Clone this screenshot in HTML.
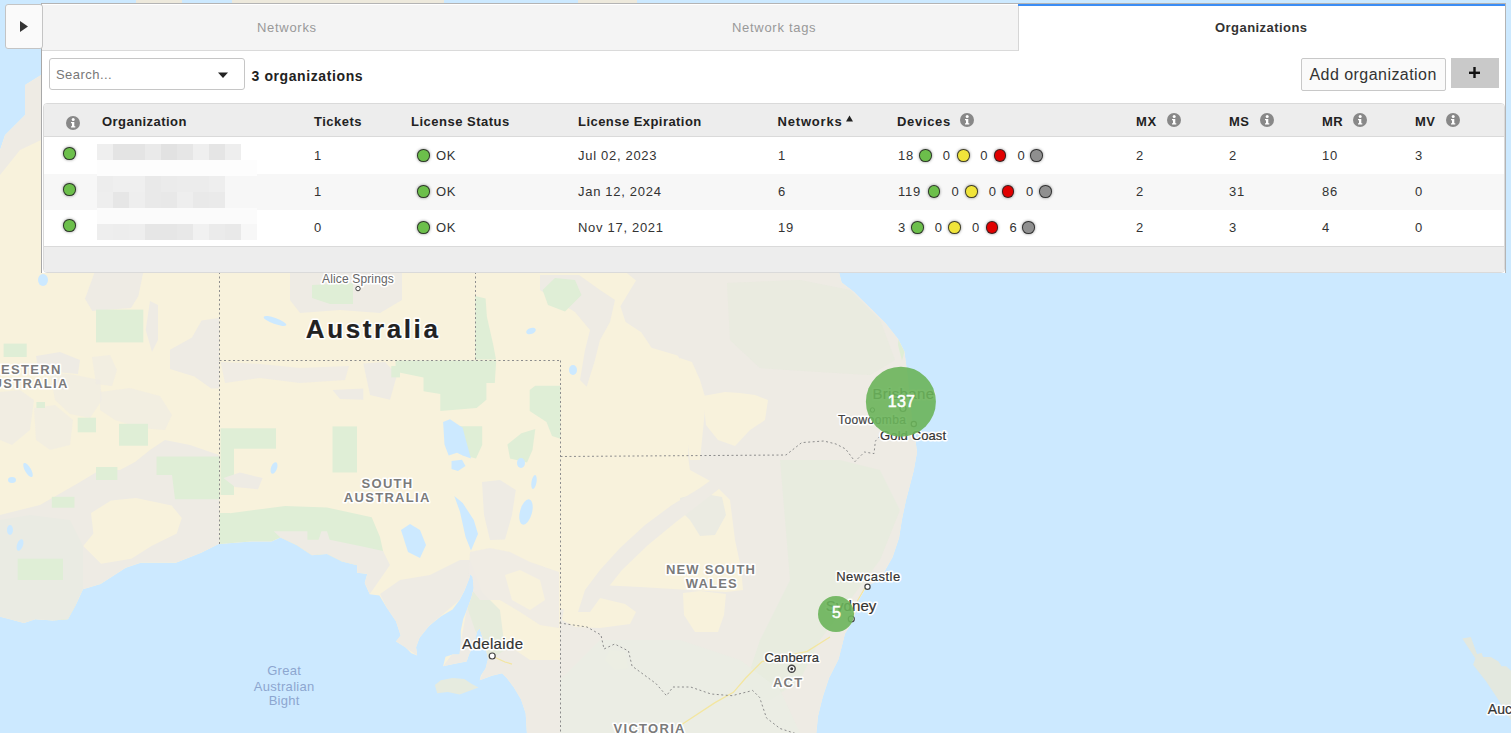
<!DOCTYPE html>
<html><head><meta charset="utf-8">
<style>*{box-sizing:border-box}
html,body{margin:0;padding:0}
body{width:1511px;height:733px;overflow:hidden;position:relative;background:#cce9ff;font-family:"Liberation Sans",sans-serif;color:#333}
#map{position:absolute;left:0;top:0;width:1511px;height:733px}
.abs{position:absolute;white-space:nowrap;line-height:normal}
#toggle{position:absolute;left:5px;top:4px;width:38px;height:45px;background:#fafafa;border:1px solid #c4c4c4;border-radius:3px}
.tabt{font-size:13px;letter-spacing:0.7px}
.dot{position:absolute;width:12.6px;height:12.6px;margin:0.2px 0 0 0.2px;border-radius:50%;border:1.4px solid rgba(35,35,35,0.85);box-shadow:0 0 3px rgba(0,0,0,0.45)}
.g{background:#6cbf4b}.y{background:#f0e43a}.r{background:#e00000}.gr{background:#8f8f8f}
</style></head><body>
<svg id="map" width="1511" height="733" viewBox="0 0 1511 733">
<rect width="1511" height="733" fill="#cce9ff"/>
<path d="M0.0,150.0 L5.0,135.0 L15.0,125.0 L25.0,115.0 L25.0,85.0 L41.0,75.0 L41.0,4.0 L838.0,4.0 L838.4,270.0 L841.6,282.5 L854.0,292.0 L863.5,301.4 L873.0,310.8 L885.5,323.3 L898.0,339.0 L904.3,351.6 L906.0,364.0 L908.0,380.0 L910.0,400.0 L912.0,420.0 L915.3,439.4 L917.0,452.0 L913.7,470.8 L906.0,500.0 L902.0,519.0 L899.0,538.0 L892.6,557.0 L880.0,579.5 L867.0,586.0 L857.6,601.7 L852.9,620.8 L845.0,633.5 L838.6,659.0 L829.0,678.0 L822.7,697.0 L818.0,716.0 L816.3,733.0 L526.9,733.0 L525.7,713.3 L521.0,699.2 L513.9,687.4 L506.8,678.0 L502.1,673.2 L492.7,675.6 L479.7,680.3 L480.9,675.6 L485.6,668.5 L488.0,659.1 L485.6,647.3 L482.0,635.5 L479.7,628.4 L477.3,630.8 L473.8,644.9 L469.0,654.4 L466.7,661.4 L454.9,663.8 L443.1,666.2 L445.5,656.7 L452.6,654.4 L459.6,654.4 L460.8,642.6 L460.8,630.8 L463.2,619.0 L467.9,607.2 L471.4,597.7 L473.8,588.3 L472.6,576.5 L470.3,574.2 L469.0,578.9 L464.4,590.7 L459.6,600.1 L452.6,609.5 L440.8,616.6 L429.0,626.0 L419.5,637.8 L416.0,647.3 L417.2,655.5 L411.3,653.2 L405.4,647.3 L396.0,641.4 L400.7,635.5 L396.0,621.3 L386.5,607.2 L379.4,595.4 L369.7,594.2 L364.7,582.9 L367.2,574.1 L357.1,572.8 L357.1,565.3 L342.0,561.5 L327.0,554.0 L311.9,555.2 L296.8,545.2 L280.4,537.6 L271.6,541.4 L251.5,541.4 L218.8,543.9 L201.2,552.7 L176.0,562.8 L140.8,562.8 L125.8,567.8 L100.6,584.1 L83.0,589.2 L75.5,605.5 L67.9,619.3 L52.8,620.6 L35.2,619.3 L23.9,623.1 L10.0,619.3 L0.0,616.8 Z" fill="#f8f2dc"/>
<path d="M434.9,685.0 L440.8,680.3 L452.6,678.0 L464.4,679.1 L471.4,683.8 L478.5,687.4 L469.0,690.9 L459.6,694.5 L447.8,692.1 L437.2,693.3 Z" fill="#e6ebdf"/>
<path d="M1462.3,638.5 L1470.8,636.9 L1477.0,653.9 L1481.6,653.1 L1483.1,657.0 L1490.8,657.0 L1498.5,661.6 L1501.6,666.2 L1506.2,666.2 L1511.0,670.8 L1511.0,733.0 L1511.0,720.0 L1507.8,715.5 L1498.5,700.1 L1486.2,681.6 L1473.1,664.7 L1475.4,658.5 Z" fill="#e3e8df"/>
<rect x="136" y="0" width="46" height="4" fill="#ede9dc"/><rect x="232" y="0" width="212" height="4" fill="#ede9dc"/><rect x="578" y="0" width="59" height="4" fill="#ede9dc"/>
<clipPath id="lc"><path d="M0.0,150.0 L5.0,135.0 L15.0,125.0 L25.0,115.0 L25.0,85.0 L41.0,75.0 L41.0,4.0 L838.0,4.0 L838.4,270.0 L841.6,282.5 L854.0,292.0 L863.5,301.4 L873.0,310.8 L885.5,323.3 L898.0,339.0 L904.3,351.6 L906.0,364.0 L908.0,380.0 L910.0,400.0 L912.0,420.0 L915.3,439.4 L917.0,452.0 L913.7,470.8 L906.0,500.0 L902.0,519.0 L899.0,538.0 L892.6,557.0 L880.0,579.5 L867.0,586.0 L857.6,601.7 L852.9,620.8 L845.0,633.5 L838.6,659.0 L829.0,678.0 L822.7,697.0 L818.0,716.0 L816.3,733.0 L526.9,733.0 L525.7,713.3 L521.0,699.2 L513.9,687.4 L506.8,678.0 L502.1,673.2 L492.7,675.6 L479.7,680.3 L480.9,675.6 L485.6,668.5 L488.0,659.1 L485.6,647.3 L482.0,635.5 L479.7,628.4 L477.3,630.8 L473.8,644.9 L469.0,654.4 L466.7,661.4 L454.9,663.8 L443.1,666.2 L445.5,656.7 L452.6,654.4 L459.6,654.4 L460.8,642.6 L460.8,630.8 L463.2,619.0 L467.9,607.2 L471.4,597.7 L473.8,588.3 L472.6,576.5 L470.3,574.2 L469.0,578.9 L464.4,590.7 L459.6,600.1 L452.6,609.5 L440.8,616.6 L429.0,626.0 L419.5,637.8 L416.0,647.3 L417.2,655.5 L411.3,653.2 L405.4,647.3 L396.0,641.4 L400.7,635.5 L396.0,621.3 L386.5,607.2 L379.4,595.4 L369.7,594.2 L364.7,582.9 L367.2,574.1 L357.1,572.8 L357.1,565.3 L342.0,561.5 L327.0,554.0 L311.9,555.2 L296.8,545.2 L280.4,537.6 L271.6,541.4 L251.5,541.4 L218.8,543.9 L201.2,552.7 L176.0,562.8 L140.8,562.8 L125.8,567.8 L100.6,584.1 L83.0,589.2 L75.5,605.5 L67.9,619.3 L52.8,620.6 L35.2,619.3 L23.9,623.1 L10.0,619.3 L0.0,616.8 Z"/></clipPath><g clip-path="url(#lc)"><path d="M579.0,272.0 L625.6,272.0 L636.0,280.4 L620.4,306.3 L625.6,321.9 L641.2,332.2 L651.5,347.8 L677.5,355.6 L690.4,373.7 L693.0,394.5 L690.4,415.2 L688.0,456.0 L690.0,470.0 L712.0,482.0 L730.0,500.0 L735.0,540.0 L741.0,568.0 L743.0,590.0 L726.0,592.0 L690.0,590.0 L640.0,587.0 L600.0,585.0 L580.0,605.0 L560.0,610.0 L560.0,733.0 L1000.0,733.0 L1000.0,272.0 Z" fill="#eeebe4"/>
<path d="M680.0,358.0 L692.0,362.0 L700.0,380.0 L706.0,400.0 L703.0,430.0 L700.0,460.0 L690.0,460.0 L685.0,420.0 L680.0,380.0 Z" fill="#f8f2dc"/>
<path d="M703.0,396.0 L725.0,392.0 L740.0,393.0 L755.0,395.0 L768.0,400.0 L765.0,420.0 L750.0,430.0 L735.0,446.0 L718.0,440.0 L706.0,425.0 Z" fill="#f8f2dc"/>
<path d="M683.0,593.0 L700.0,591.0 L726.0,594.0 L724.0,615.0 L718.0,632.0 L695.0,632.0 L684.0,615.0 Z" fill="#f8f2dc"/>
<path d="M565.0,602.0 L600.0,598.0 L625.0,604.0 L636.0,612.0 L630.0,624.0 L600.0,628.0 L575.0,627.0 L562.0,620.0 Z" fill="#f8f2dc"/>
<path d="M610.0,650.0 L625.0,652.0 L628.0,668.0 L615.0,670.0 L605.0,660.0 Z" fill="#f8f2dc"/>
<path d="M680.0,498.0 L700.0,493.0 L722.0,497.0 L726.0,515.0 L715.0,535.0 L700.0,536.0 L690.0,520.0 L682.0,512.0 Z" fill="#ebebe2"/>
<path d="M714.0,478.0 L700.0,488.0 L672.0,505.0 L645.0,525.0 L620.0,548.0 L600.0,570.0 L585.0,590.0 L578.0,612.0 L590.0,612.0 L603.0,594.0 L622.0,570.0 L648.0,545.0 L676.0,522.0 L705.0,500.0 L720.0,488.0 Z" fill="#eeebe4"/>
<path d="M727.0,283.0 L800.0,280.0 L850.0,290.0 L880.0,320.0 L895.0,360.0 L870.0,375.0 L820.0,372.0 L760.0,368.0 L730.0,340.0 Z" fill="#e6ecdc" opacity="0.5"/>
<path d="M780.0,460.0 L840.0,460.0 L880.0,470.0 L900.0,510.0 L880.0,560.0 L850.0,600.0 L820.0,640.0 L800.0,680.0 L770.0,700.0 L740.0,700.0 L760.0,640.0 L790.0,580.0 Z" fill="#e5ecdc" opacity="0.6"/>
<path d="M600.0,640.0 L680.0,640.0 L740.0,660.0 L780.0,690.0 L800.0,733.0 L560.0,733.0 L560.0,680.0 Z" fill="#eaede3" opacity="0.9"/>
<path d="M900.0,316.7 L906.0,318.0 L910.0,330.0 L905.0,350.0 L902.0,360.7 L898.0,345.0 Z" fill="#dfeed6"/>
<path d="M540.0,275.0 L579.0,275.0 L600.0,290.0 L615.0,300.0 L610.0,321.9 L600.0,340.0 L595.0,360.0 L586.7,386.7 L580.0,380.0 L585.0,350.0 L590.0,330.0 L575.0,312.0 L555.0,300.0 L540.0,290.0 Z" fill="#eeebe4"/>
<path d="M475.2,296.0 L485.6,298.5 L486.9,316.7 L493.3,345.0 L496.0,359.5 L475.2,359.5 Z" fill="#dfeed6"/>
<path d="M542.6,290.0 L555.0,278.0 L575.0,280.0 L581.5,295.0 L565.0,311.5 L548.0,305.0 Z" fill="#dfeed6"/>
<path d="M395.6,360.6 L496.2,360.6 L494.8,383.0 L486.4,383.0 L486.4,399.7 L476.6,408.0 L440.3,410.9 L440.3,394.0 L423.5,391.3 L423.5,377.4 L395.6,371.8 Z" fill="#dfeed6"/>
<path d="M529.7,390.0 L535.3,385.7 L560.5,385.7 L560.5,438.8 L552.0,436.0 L546.5,422.0 L529.7,411.0 Z" fill="#dfeed6"/>
<path d="M507.4,444.4 L521.4,433.3 L535.3,429.0 L532.5,450.0 L527.0,462.6 L510.0,458.4 Z" fill="#dfeed6"/>
<path d="M459.9,426.3 L482.2,426.3 L482.2,445.0 L476.0,458.4 L462.0,455.0 Z" fill="#dfeed6"/>
<rect x="332.5" y="426.4" width="24.5" height="46.10000000000002" fill="#dfeed6"/>
<path d="M220.6,428.3 L276.0,428.3 L276.0,448.8 L234.0,448.8 L234.0,495.0 L220.6,495.0 Z" fill="#dfeed6"/>
<path d="M220.6,514.5 L285.0,506.0 L327.0,507.5 L371.7,517.3 L380.0,537.0 L385.0,560.0 L357.0,565.0 L342.0,561.5 L327.0,554.0 L311.9,555.2 L296.8,545.2 L280.4,537.6 L271.6,541.4 L251.5,541.4 L220.6,544.0 Z" fill="#dfeed6"/>
<path d="M273.8,531.3 L307.4,531.3 L307.4,539.7 L318.6,539.7 L321.4,531.3 L327.0,531.3 L329.7,539.7 L360.0,546.0 L383.0,551.0 L390.0,565.0 L369.7,594.2 L364.7,582.9 L367.2,574.1 L357.1,572.8 L357.1,565.3 L342.0,561.5 L327.0,554.0 L311.9,555.2 L296.8,545.2 L280.4,537.6 Z" fill="#eeebe4"/>
<path d="M223.4,478.0 L240.0,472.5 L262.6,478.0 L258.0,489.3 L235.0,487.0 Z" fill="#eeebe4"/>
<path d="M220.6,362.0 L260.0,364.0 L300.0,368.0 L349.0,366.0 L345.0,380.0 L300.0,383.0 L260.0,378.0 L225.0,383.0 Z" fill="#eeebe4" opacity="0.9"/>
<path d="M332.5,390.0 L363.3,388.6 L363.3,399.8 L340.0,399.0 Z" fill="#eeebe4"/>
<path d="M363.3,363.4 L385.0,362.0 L397.0,375.0 L390.0,399.8 L370.0,395.0 Z" fill="#eeebe4"/>
<path d="M391.3,366.0 L400.0,366.0 L400.0,377.4 L391.3,377.4 Z" fill="#dfeed6"/>
<path d="M290.0,272.0 L402.0,272.0 L402.0,300.0 L380.0,313.0 L340.0,310.0 L300.0,313.0 L290.0,300.0 Z" fill="#eeebe4"/>
<path d="M312.0,285.0 L353.0,283.0 L353.0,304.0 L330.0,304.0 L312.0,298.0 Z" fill="#dfeed6"/>
<path d="M380.0,594.0 L400.0,580.0 L430.0,575.0 L460.0,560.0 L470.0,560.0 L485.0,600.0 L500.0,640.0 L530.0,660.0 L560.0,660.0 L560.0,733.0 L526.9,733.0 L513.9,687.4 L492.7,675.6 L479.7,680.3 L488.0,659.1 L479.7,628.4 L466.7,661.4 L443.1,666.2 L460.8,642.6 L472.6,576.5 L459.6,600.1 L429.0,626.0 L417.2,655.5 L396.0,641.4 L386.5,607.2 Z" fill="#eeebe4"/>
<path d="M482.0,482.0 L500.0,480.0 L515.8,490.0 L512.0,515.0 L505.0,539.5 L490.0,540.0 L484.0,515.0 Z" fill="#eeebe4"/>
<path d="M463.0,595.0 L480.0,590.0 L500.0,610.0 L505.0,650.0 L490.0,660.0 L475.0,630.0 Z" fill="#e6ecdc"/>
<path d="M470.0,552.0 L490.0,548.0 L510.0,552.0 L530.0,562.0 L559.0,572.0 L559.0,628.0 L540.0,625.0 L520.0,612.0 L500.0,600.0 L480.0,600.0 L468.0,585.0 Z" fill="#eeebe4" opacity="0.9"/>
<path d="M505.0,575.0 L520.0,570.0 L540.0,580.0 L545.0,600.0 L530.0,610.0 L512.0,600.0 Z" fill="#f8f2dc"/>
<ellipse cx="275" cy="321" rx="12" ry="3" fill="#cce9ff" transform="rotate(20 275 321)"/>
<path d="M443.1,422.0 L450.0,419.3 L462.7,427.7 L465.5,438.8 L471.0,458.4 L462.7,455.6 L457.0,452.8 L448.7,455.6 L444.5,444.4 Z" fill="#cce9ff"/>
<path d="M451.5,461.0 L462.0,459.8 L465.5,466.0 L458.0,471.0 L451.5,469.0 Z" fill="#cce9ff"/>
<path d="M454.3,496.0 L462.7,503.0 L473.8,520.0 L478.0,534.0 L471.0,550.6 L465.5,536.7 L459.9,511.5 Z" fill="#cce9ff"/>
<ellipse cx="526" cy="512" rx="6" ry="13" fill="#cce9ff" transform="rotate(15 526 512)"/>
<path d="M401.0,530.0 L410.0,524.0 L420.0,530.0 L426.0,545.0 L420.0,558.0 L408.0,552.0 Z" fill="#cce9ff"/>
<ellipse cx="521" cy="463" rx="4" ry="5" fill="#cce9ff" transform="rotate(0 521 463)"/>
<ellipse cx="534" cy="482" rx="2.5" ry="7" fill="#cce9ff" transform="rotate(10 534 482)"/>
<ellipse cx="274" cy="468" rx="3" ry="6" fill="#cce9ff" transform="rotate(20 274 468)"/>
<ellipse cx="531" cy="331" rx="5" ry="3" fill="#cce9ff" transform="rotate(-20 531 331)"/>
<ellipse cx="573" cy="370" rx="4" ry="5" fill="#cce9ff" transform="rotate(0 573 370)"/>
<ellipse cx="43" cy="280" rx="5" ry="6" fill="#cce9ff" transform="rotate(0 43 280)"/>
<path d="M94.7,272.0 L143.3,272.0 L138.4,296.0 L131.0,308.0 L92.3,311.0 L85.0,298.7 Z" fill="#eeebe4"/>
<rect x="96" y="309.6" width="47.30000000000001" height="32.799999999999955" fill="#dfeed6"/>
<path d="M150.0,301.0 L158.0,305.0 L158.0,340.0 L152.0,352.0 L145.7,330.0 Z" fill="#eeebe4"/>
<path d="M170.0,349.7 L192.0,337.6 L201.6,320.6 L219.0,318.0 L219.0,388.6 L211.3,388.6 L194.3,376.4 L170.0,369.0 Z" fill="#eeebe4"/>
<rect x="3.6" y="343.6" width="23.099999999999998" height="13.399999999999977" fill="#dfeed6"/>
<path d="M36.0,356.0 L60.0,352.0 L80.0,360.0 L78.0,374.0 L55.0,372.0 L38.0,368.0 Z" fill="#eeebe4"/>
<path d="M50.0,372.0 L75.0,375.0 L100.0,380.0 L102.0,400.0 L90.0,418.0 L70.0,414.0 L55.0,400.0 Z" fill="#eeebe4" opacity="0.6"/>
<path d="M92.0,357.0 L110.0,355.0 L117.0,370.0 L112.0,386.0 L96.0,384.0 Z" fill="#eeebe4" opacity="0.6"/>
<path d="M100.0,392.0 L130.0,388.0 L160.0,396.0 L172.0,415.0 L165.0,430.0 L140.0,428.0 L115.0,420.0 L100.0,410.0 Z" fill="#eeebe4" opacity="0.6"/>
<path d="M34.0,408.0 L55.0,405.0 L73.0,420.0 L70.0,445.0 L50.0,450.0 L36.0,440.0 Z" fill="#eeebe4" opacity="0.6"/>
<path d="M0.0,392.0 L20.0,390.0 L34.0,400.0 L30.0,430.0 L12.0,445.0 L0.0,440.0 Z" fill="#eeebe4" opacity="0.7"/>
<rect x="77.7" y="417.7" width="18.299999999999997" height="14.600000000000023" fill="#dfeed6"/>
<rect x="119" y="423.8" width="29" height="21.899999999999977" fill="#dfeed6"/>
<rect x="36.4" y="402" width="8.600000000000001" height="6" fill="#dfeed6"/>
<path d="M0.0,515.0 L40.0,505.0 L75.0,485.0 L100.0,470.0 L120.0,470.0 L135.0,462.0 L150.0,450.0 L165.0,440.0 L190.0,445.0 L219.0,455.0 L219.0,544.0 L201.0,552.7 L176.0,562.8 L140.8,562.8 L125.8,567.8 L100.6,584.1 L83.0,589.2 L75.5,605.5 L67.9,619.3 L52.8,620.6 L35.2,619.3 L23.9,623.1 L10.0,619.3 L0.0,616.8 Z" fill="#eeebe4"/>
<path d="M91.0,513.0 L111.0,500.6 L136.0,498.0 L171.7,505.6 L181.8,518.0 L176.7,533.4 L151.5,546.0 L131.3,558.7 L101.0,563.7 L83.3,546.0 L93.4,533.4 Z" fill="#f8f2dc"/>
<path d="M156.5,456.4 L219.6,456.4 L219.6,499.3 L175.0,499.3 L172.0,475.0 L156.5,475.0 Z" fill="#dfeed6"/>
<rect x="219.6" y="513" width="10.400000000000006" height="30.5" fill="#dfeed6"/>
<rect x="96" y="467" width="21.400000000000006" height="13" fill="#dfeed6"/>
<rect x="51.8" y="496.8" width="22.700000000000003" height="10.899999999999977" fill="#dfeed6"/>
<rect x="17.7" y="558.7" width="45.3" height="21.299999999999955" fill="#dfeed6"/>
<path d="M55.5,599.0 L75.7,599.0 L75.5,605.5 L67.9,619.3 L55.5,621.8 Z" fill="#dfeed6"/>
<path d="M0.0,520.0 L30.0,515.0 L70.0,520.0 L83.0,546.0 L83.0,589.2 L75.5,605.5 L67.9,619.3 L52.8,620.6 L35.2,619.3 L23.9,623.1 L10.0,619.3 L0.0,616.8 Z" fill="#eaebe3"/>
<rect x="17.7" y="558.7" width="45.3" height="21.299999999999955" fill="#dfeed6"/>
<ellipse cx="28" cy="470" rx="3" ry="8" fill="#cce9ff" transform="rotate(-30 28 470)"/>
<ellipse cx="12" cy="480" rx="4" ry="3" fill="#cce9ff" transform="rotate(0 12 480)"/>
<ellipse cx="10" cy="530" rx="3" ry="5" fill="#cce9ff" transform="rotate(0 10 530)"/>
<ellipse cx="20" cy="545" rx="3" ry="6" fill="#cce9ff" transform="rotate(20 20 545)"/>
<path d="M41.0,75.0 L25.0,85.0 L25.0,115.0 L15.0,125.0 L5.0,135.0 L0.0,150.0 L0.0,175.0 L20.0,150.0 L41.0,140.0 Z" fill="#eeebe4"/>
<path d="M830,637 L807.2,651.3 L762,661.5 L745.7,678 L733.4,692.3 L715,702.6 L684,723 L670,733" fill="none" stroke="#f3e6a0" stroke-width="1.3"/>
<path d="M492,656 L505,662 L512,664" fill="none" stroke="#f3e6a0" stroke-width="1.3"/>
<path d="M852,619 L858,600 L865,588" fill="none" stroke="#f3e6a0" stroke-width="1.3"/></g>
<path d="M219.5,272 V544" fill="none" stroke="#8d8d8d" stroke-width="1" stroke-dasharray="2,2.5"/>
<path d="M475.5,272 V360.5 M219.5,360.5 H560.5 M560.5,360.5 V733" fill="none" stroke="#8d8d8d" stroke-width="1" stroke-dasharray="2,2.5"/>
<path d="M560.5,456.5 L786,455 L801.7,442.6 L823.7,441 L836,444 L845.6,449 L855,461.5 L864.5,452 L874,453.6 L875.4,441 L880,436.4" fill="none" stroke="#8d8d8d" stroke-width="1" stroke-dasharray="2,2.5"/>
<path d="M559.5,623 L587,627 L601,635 L604,649 L614.7,644 L628.5,651 L632,666 L656,683.6 L666.5,695.7 L673,687 L690.6,687 L711,694 L732,695.7 L752.7,690.5 L759.6,697.4 L766.5,718 L780,728.5 L800,735" fill="none" stroke="#8d8d8d" stroke-width="1" stroke-dasharray="2,2.5"/>
<text x="322" y="282.6" font-family="Liberation Sans" font-size="12" font-weight="normal" letter-spacing="0.15" text-anchor="start" opacity="1" fill="#fff" stroke="#fff" stroke-width="3.2" stroke-linejoin="round" opacity="0.9">Alice Springs</text><text x="322" y="282.6" font-family="Liberation Sans" font-size="12" font-weight="normal" letter-spacing="0.15" text-anchor="start" opacity="1" fill="#666" stroke="#666" stroke-width="0">Alice Springs</text>
<text x="305.8" y="338.3" font-family="Liberation Sans" font-size="26" font-weight="bold" letter-spacing="2.6" text-anchor="start" opacity="1" fill="#fff" stroke="#fff" stroke-width="3.2" stroke-linejoin="round" opacity="0.9">Australia</text><text x="305.8" y="338.3" font-family="Liberation Sans" font-size="26" font-weight="bold" letter-spacing="2.6" text-anchor="start" opacity="1" fill="#222" stroke="#222" stroke-width="0.2">Australia</text>
<text x="61.6" y="374.2" font-family="Liberation Sans" font-size="13" font-weight="bold" letter-spacing="1.3" text-anchor="end" opacity="1" fill="#fff" stroke="#fff" stroke-width="3.2" stroke-linejoin="round" opacity="0.9">WESTERN</text><text x="61.6" y="374.2" font-family="Liberation Sans" font-size="13" font-weight="bold" letter-spacing="1.3" text-anchor="end" opacity="1" fill="#7b7b7b" stroke="#7b7b7b" stroke-width="0">WESTERN</text>
<text x="68.7" y="387.8" font-family="Liberation Sans" font-size="13" font-weight="bold" letter-spacing="1.3" text-anchor="end" opacity="1" fill="#fff" stroke="#fff" stroke-width="3.2" stroke-linejoin="round" opacity="0.9">AUSTRALIA</text><text x="68.7" y="387.8" font-family="Liberation Sans" font-size="13" font-weight="bold" letter-spacing="1.3" text-anchor="end" opacity="1" fill="#7b7b7b" stroke="#7b7b7b" stroke-width="0">AUSTRALIA</text>
<text x="361.5" y="487.8" font-family="Liberation Sans" font-size="13" font-weight="bold" letter-spacing="1.3" text-anchor="start" opacity="1" fill="#fff" stroke="#fff" stroke-width="3.2" stroke-linejoin="round" opacity="0.9">SOUTH</text><text x="361.5" y="487.8" font-family="Liberation Sans" font-size="13" font-weight="bold" letter-spacing="1.3" text-anchor="start" opacity="1" fill="#7b7b7b" stroke="#7b7b7b" stroke-width="0">SOUTH</text>
<text x="343.8" y="501.7" font-family="Liberation Sans" font-size="13" font-weight="bold" letter-spacing="1.3" text-anchor="start" opacity="1" fill="#fff" stroke="#fff" stroke-width="3.2" stroke-linejoin="round" opacity="0.9">AUSTRALIA</text><text x="343.8" y="501.7" font-family="Liberation Sans" font-size="13" font-weight="bold" letter-spacing="1.3" text-anchor="start" opacity="1" fill="#7b7b7b" stroke="#7b7b7b" stroke-width="0">AUSTRALIA</text>
<text x="665.9" y="574.3" font-family="Liberation Sans" font-size="13" font-weight="bold" letter-spacing="1.2" text-anchor="start" opacity="1" fill="#fff" stroke="#fff" stroke-width="3.2" stroke-linejoin="round" opacity="0.9">NEW SOUTH</text><text x="665.9" y="574.3" font-family="Liberation Sans" font-size="13" font-weight="bold" letter-spacing="1.2" text-anchor="start" opacity="1" fill="#7b7b7b" stroke="#7b7b7b" stroke-width="0">NEW SOUTH</text>
<text x="685.7" y="587.8" font-family="Liberation Sans" font-size="13" font-weight="bold" letter-spacing="1.2" text-anchor="start" opacity="1" fill="#fff" stroke="#fff" stroke-width="3.2" stroke-linejoin="round" opacity="0.9">WALES</text><text x="685.7" y="587.8" font-family="Liberation Sans" font-size="13" font-weight="bold" letter-spacing="1.2" text-anchor="start" opacity="1" fill="#7b7b7b" stroke="#7b7b7b" stroke-width="0">WALES</text>
<text x="613.5" y="733" font-family="Liberation Sans" font-size="13" font-weight="bold" letter-spacing="1.3" text-anchor="start" opacity="1" fill="#fff" stroke="#fff" stroke-width="3.2" stroke-linejoin="round" opacity="0.9">VICTORIA</text><text x="613.5" y="733" font-family="Liberation Sans" font-size="13" font-weight="bold" letter-spacing="1.3" text-anchor="start" opacity="1" fill="#7b7b7b" stroke="#7b7b7b" stroke-width="0">VICTORIA</text>
<text x="773" y="686.7" font-family="Liberation Sans" font-size="13" font-weight="bold" letter-spacing="1.2" text-anchor="start" opacity="1" fill="#fff" stroke="#fff" stroke-width="3.2" stroke-linejoin="round" opacity="0.9">ACT</text><text x="773" y="686.7" font-family="Liberation Sans" font-size="13" font-weight="bold" letter-spacing="1.2" text-anchor="start" opacity="1" fill="#7b7b7b" stroke="#7b7b7b" stroke-width="0">ACT</text>
<text x="764.4" y="661.5" font-family="Liberation Sans" font-size="13" font-weight="normal" letter-spacing="0.05" text-anchor="start" opacity="1" fill="#fff" stroke="#fff" stroke-width="3.2" stroke-linejoin="round" opacity="0.9">Canberra</text><text x="764.4" y="661.5" font-family="Liberation Sans" font-size="13" font-weight="normal" letter-spacing="0.05" text-anchor="start" opacity="1" fill="#333" stroke="#333" stroke-width="0.2">Canberra</text>
<text x="836.2" y="580.5" font-family="Liberation Sans" font-size="13" font-weight="normal" letter-spacing="0.5" text-anchor="start" opacity="1" fill="#fff" stroke="#fff" stroke-width="3.2" stroke-linejoin="round" opacity="0.9">Newcastle</text><text x="836.2" y="580.5" font-family="Liberation Sans" font-size="13" font-weight="normal" letter-spacing="0.5" text-anchor="start" opacity="1" fill="#333" stroke="#333" stroke-width="0.2">Newcastle</text>
<text x="825.8" y="611.3" font-family="Liberation Sans" font-size="15" font-weight="normal" letter-spacing="0.1" text-anchor="start" opacity="1" fill="#fff" stroke="#fff" stroke-width="3.2" stroke-linejoin="round" opacity="0.9">Sydney</text><text x="825.8" y="611.3" font-family="Liberation Sans" font-size="15" font-weight="normal" letter-spacing="0.1" text-anchor="start" opacity="1" fill="#333" stroke="#333" stroke-width="0.2">Sydney</text>
<text x="462" y="648.5" font-family="Liberation Sans" font-size="15" font-weight="normal" letter-spacing="0.4" text-anchor="start" opacity="1" fill="#fff" stroke="#fff" stroke-width="3.2" stroke-linejoin="round" opacity="0.9">Adelaide</text><text x="462" y="648.5" font-family="Liberation Sans" font-size="15" font-weight="normal" letter-spacing="0.4" text-anchor="start" opacity="1" fill="#333" stroke="#333" stroke-width="0.2">Adelaide</text>
<text x="838" y="424.4" font-family="Liberation Sans" font-size="12" font-weight="normal" letter-spacing="0.4" text-anchor="start" opacity="1" fill="#fff" stroke="#fff" stroke-width="3.2" stroke-linejoin="round" opacity="0.9">Toowoomba</text><text x="838" y="424.4" font-family="Liberation Sans" font-size="12" font-weight="normal" letter-spacing="0.4" text-anchor="start" opacity="1" fill="#444" stroke="#444" stroke-width="0.2">Toowoomba</text>
<text x="880.1" y="440.4" font-family="Liberation Sans" font-size="13" font-weight="normal" letter-spacing="0.1" text-anchor="start" opacity="1" fill="#fff" stroke="#fff" stroke-width="3.2" stroke-linejoin="round" opacity="0.9">Gold Coast</text><text x="880.1" y="440.4" font-family="Liberation Sans" font-size="13" font-weight="normal" letter-spacing="0.1" text-anchor="start" opacity="1" fill="#333" stroke="#333" stroke-width="0.2">Gold Coast</text>
<text x="872.4" y="399" font-family="Liberation Sans" font-size="15" font-weight="normal" letter-spacing="0.35" text-anchor="start" opacity="1" fill="#fff" stroke="#fff" stroke-width="3.2" stroke-linejoin="round" opacity="0.9">Brisbane</text><text x="872.4" y="399" font-family="Liberation Sans" font-size="15" font-weight="normal" letter-spacing="0.35" text-anchor="start" opacity="1" fill="#333" stroke="#333" stroke-width="0.2">Brisbane</text>
<text x="284.2" y="675" font-family="Liberation Sans" font-size="13" font-weight="normal" letter-spacing="0.3" text-anchor="middle" opacity="1" fill="#8ca6cf" stroke="#8ca6cf" stroke-width="0">Great</text>
<text x="284.2" y="690.5" font-family="Liberation Sans" font-size="13" font-weight="normal" letter-spacing="0.3" text-anchor="middle" opacity="1" fill="#8ca6cf" stroke="#8ca6cf" stroke-width="0">Australian</text>
<text x="284.2" y="705" font-family="Liberation Sans" font-size="13" font-weight="normal" letter-spacing="0.3" text-anchor="middle" opacity="1" fill="#8ca6cf" stroke="#8ca6cf" stroke-width="0">Bight</text>
<text x="1487.7" y="714" font-family="Liberation Sans" font-size="14" font-weight="normal" letter-spacing="0.1" text-anchor="start" opacity="1" fill="#fff" stroke="#fff" stroke-width="3.2" stroke-linejoin="round" opacity="0.9">Auckland</text><text x="1487.7" y="714" font-family="Liberation Sans" font-size="14" font-weight="normal" letter-spacing="0.1" text-anchor="start" opacity="1" fill="#333" stroke="#333" stroke-width="0.2">Auckland</text>
<circle cx="358" cy="288.6" r="2.2" fill="#fff" stroke="#444" stroke-width="1"/>
<circle cx="492.2" cy="656" r="3" fill="#fff" stroke="#444" stroke-width="1.2"/>
<circle cx="791.7" cy="668.8" r="3.5" fill="#fff" stroke="#444" stroke-width="1.4"/><circle cx="791.7" cy="668.8" r="1.5" fill="#333"/>
<circle cx="867.5" cy="586.7" r="2.6" fill="#fff" stroke="#444" stroke-width="1.2"/>
<circle cx="851.3" cy="619" r="3" fill="#fff" stroke="#444" stroke-width="1.2"/>
<circle cx="872.4" cy="410" r="2.2" fill="#fff" stroke="#444" stroke-width="1"/>
<circle cx="913.8" cy="424" r="2.6" fill="#fff" stroke="#444" stroke-width="1.2"/>
<circle cx="903" cy="408.5" r="3" fill="#fff" stroke="#444" stroke-width="1.2"/>
<circle cx="900.9" cy="401.7" r="35" fill="#6ab45a" opacity="0.9"/>
<circle cx="836" cy="614" r="18" fill="#6ab45a" opacity="0.9"/>
<text x="901.5" y="406.6" font-family="Liberation Sans" font-size="16" font-weight="normal" letter-spacing="0.3" text-anchor="middle" opacity="1" fill="#fff" stroke="#fff" stroke-width="0.5">137</text>
<text x="836.4" y="618.4" font-family="Liberation Sans" font-size="16" font-weight="normal" letter-spacing="0" text-anchor="middle" opacity="1" fill="#fff" stroke="#fff" stroke-width="0.5">5</text>
</svg>


<!-- panel frame -->
<div class="abs" style="left:41px;top:3px;width:1465px;height:270px;background:#fff;border-left:1px solid #a8a8a8;border-top:1px solid #b4b4b4;border-right:1px solid #b4b4b4"></div>
<!-- inactive tabs -->
<div class="abs" style="left:42px;top:5px;width:977px;height:46px;background:#f4f4f4;border-bottom:1px solid #dadada;border-right:1px solid #d6d6d6"></div>
<div class="abs" style="left:1018px;top:4px;width:487px;height:2px;background:#3b8df5"></div>
<div class="abs tabt" style="left:257px;top:20.1px;color:#999">Networks</div>
<div class="abs tabt" style="left:732px;top:20.1px;color:#999">Network tags</div>
<div class="abs tabt" style="left:1215px;top:20.1px;color:#333;font-weight:bold;letter-spacing:0.45px">Organizations</div>

<!-- toolbar -->
<div class="abs" style="left:49px;top:58px;width:196px;height:32px;border:1px solid #c6c6c6;border-radius:3px;background:#fff"></div>
<div class="abs" style="left:56px;top:67.2px;font-size:13px;letter-spacing:0.45px;color:#777">Search...</div>
<svg class="abs" style="left:217px;top:72px" width="12" height="7"><polygon points="1,0.5 11,0.5 6,6" fill="#222"/></svg>
<div class="abs" style="left:251.5px;top:67.9px;font-size:14px;font-weight:bold;letter-spacing:0.6px;color:#222">3 organizations</div>
<div class="abs" style="left:1301px;top:58px;width:145px;height:33px;border:1px solid #c8c8c8;border-radius:2px;background:#fafafa"></div>
<div class="abs" style="left:1309.5px;top:66px;font-size:16px;letter-spacing:0.45px;color:#333">Add organization</div>
<div class="abs" style="left:1451px;top:58px;width:48px;height:30px;background:#c9c9c9"></div>
<svg class="abs" style="left:1469px;top:67px" width="12" height="12"><rect x="0" y="4.6" width="11" height="2.4" fill="#111"/><rect x="4.3" y="0" width="2.4" height="11" fill="#111"/></svg>

<!-- table -->
<div class="abs" style="left:43px;top:103px;width:1462px;height:170px;border:1px solid #dadada;border-radius:4px;background:#fff;overflow:hidden">
  <div class="abs" style="left:0;top:0;width:1460px;height:33px;background:#ededed;border-bottom:1px solid #dadada"></div>
  <div class="abs" style="left:0;top:70px;width:1460px;height:36px;background:#f7f7f7"></div>
  <div class="abs" style="left:0;top:142px;width:1460px;height:26px;background:#ededed;border-top:1px solid #dadada"></div>
</div>

<div id="toggle"><svg width="38" height="45" style="position:absolute;left:-1px;top:-1px"><polygon points="15,17 23,22.5 15,28" fill="#333"/></svg></div>
<svg class="abs" style="left:97px;top:144px" width="160" height="96"><rect x="0" y="0" width="16" height="16" fill="#efefef"/><rect x="16" y="0" width="16" height="16" fill="#e4e4e4"/><rect x="32" y="0" width="16" height="16" fill="#e4e4e4"/><rect x="48" y="0" width="16" height="16" fill="#eaeaea"/><rect x="64" y="0" width="16" height="16" fill="#e2e2e2"/><rect x="80" y="0" width="16" height="16" fill="#e6e6e6"/><rect x="96" y="0" width="16" height="16" fill="#efefef"/><rect x="112" y="0" width="16" height="16" fill="#e5e5e5"/><rect x="128" y="0" width="16" height="16" fill="#eeeeee"/><rect x="0" y="16" width="16" height="16" fill="#fdfdfd"/><rect x="16" y="16" width="16" height="16" fill="#fdfdfd"/><rect x="32" y="16" width="16" height="16" fill="#fdfdfd"/><rect x="48" y="16" width="16" height="16" fill="#fdfdfd"/><rect x="64" y="16" width="16" height="16" fill="#fdfdfd"/><rect x="80" y="16" width="16" height="16" fill="#fdfdfd"/><rect x="96" y="16" width="16" height="16" fill="#fdfdfd"/><rect x="112" y="16" width="16" height="16" fill="#fdfdfd"/><rect x="128" y="16" width="16" height="16" fill="#fdfdfd"/><rect x="144" y="16" width="16" height="16" fill="#fdfdfd"/><rect x="0" y="32" width="16" height="16" fill="#ededed"/><rect x="16" y="32" width="16" height="16" fill="#efefef"/><rect x="32" y="32" width="16" height="16" fill="#efefef"/><rect x="48" y="32" width="16" height="16" fill="#e9e9e9"/><rect x="64" y="32" width="16" height="16" fill="#ebebeb"/><rect x="80" y="32" width="16" height="16" fill="#ececec"/><rect x="96" y="32" width="16" height="16" fill="#ececec"/><rect x="112" y="32" width="16" height="16" fill="#eeeeee"/><rect x="0" y="48" width="16" height="16" fill="#eeeeee"/><rect x="16" y="48" width="16" height="16" fill="#e6e6e6"/><rect x="32" y="48" width="16" height="16" fill="#eeeeee"/><rect x="48" y="48" width="16" height="16" fill="#e9e9e9"/><rect x="64" y="48" width="16" height="16" fill="#e8e8e8"/><rect x="80" y="48" width="16" height="16" fill="#eeeeee"/><rect x="96" y="48" width="16" height="16" fill="#e9e9e9"/><rect x="112" y="48" width="16" height="16" fill="#eaeaea"/><rect x="0" y="64" width="16" height="16" fill="#fbfbfb"/><rect x="16" y="64" width="16" height="16" fill="#fbfbfb"/><rect x="32" y="64" width="16" height="16" fill="#fbfbfb"/><rect x="48" y="64" width="16" height="16" fill="#fbfbfb"/><rect x="64" y="64" width="16" height="16" fill="#fbfbfb"/><rect x="80" y="64" width="16" height="16" fill="#fbfbfb"/><rect x="96" y="64" width="16" height="16" fill="#fbfbfb"/><rect x="112" y="64" width="16" height="16" fill="#fbfbfb"/><rect x="128" y="64" width="16" height="16" fill="#fbfbfb"/><rect x="144" y="64" width="16" height="16" fill="#fbfbfb"/><rect x="0" y="80" width="16" height="16" fill="#eeeeee"/><rect x="16" y="80" width="16" height="16" fill="#ededed"/><rect x="32" y="80" width="16" height="16" fill="#eeeeee"/><rect x="48" y="80" width="16" height="16" fill="#e6e6e6"/><rect x="64" y="80" width="16" height="16" fill="#e6e6e6"/><rect x="80" y="80" width="16" height="16" fill="#e8e8e8"/><rect x="96" y="80" width="16" height="16" fill="#f1f1f1"/><rect x="112" y="80" width="16" height="16" fill="#ebebeb"/><rect x="128" y="80" width="16" height="16" fill="#e9e9e9"/><rect x="144" y="80" width="16" height="16" fill="#f7f7f7"/></svg>

<svg class="abs" style="left:65.8px;top:116px" width="14" height="14"><circle cx="7" cy="7" r="7" fill="#888"/><circle cx="7.2" cy="3.6" r="1.5" fill="#fff"/><path d="M5 6 H8.3 V10.3 H9.3 V11.6 H5 V10.3 H6 V7.3 H5 Z" fill="#fff"/></svg>
<div class="abs" style="left:102px;top:114.23px;font-size:13px;font-weight:bold;letter-spacing:0.45px;color:#222;">Organization</div>
<div class="abs" style="left:314px;top:114.23px;font-size:13px;font-weight:bold;letter-spacing:0.5px;color:#222;">Tickets</div>
<div class="abs" style="left:411px;top:114.23px;font-size:13px;font-weight:bold;letter-spacing:0.5px;color:#222;">License Status</div>
<div class="abs" style="left:578px;top:114.23px;font-size:13px;font-weight:bold;letter-spacing:0.45px;color:#222;">License Expiration</div>
<div class="abs" style="left:777.6px;top:114.23px;font-size:13px;font-weight:bold;letter-spacing:0.8px;color:#222;">Networks</div>
<div class="abs" style="left:897px;top:114.23px;font-size:13px;font-weight:bold;letter-spacing:0.68px;color:#222;">Devices</div>
<div class="abs" style="left:1136px;top:114.23px;font-size:13px;font-weight:bold;letter-spacing:0.6px;color:#222;">MX</div>
<div class="abs" style="left:1229px;top:114.23px;font-size:13px;font-weight:bold;letter-spacing:0.45px;color:#222;">MS</div>
<div class="abs" style="left:1322px;top:114.23px;font-size:13px;font-weight:bold;letter-spacing:0.45px;color:#222;">MR</div>
<div class="abs" style="left:1415px;top:114.23px;font-size:13px;font-weight:bold;letter-spacing:0.45px;color:#222;">MV</div>
<svg class="abs" style="left:846px;top:115px" width="8" height="7"><polygon points="3.5,0.5 7,6.5 0,6.5" fill="#222"/></svg>
<svg class="abs" style="left:959.9px;top:113.3px" width="14" height="14"><circle cx="7" cy="7" r="7" fill="#888"/><circle cx="7.2" cy="3.6" r="1.5" fill="#fff"/><path d="M5 6 H8.3 V10.3 H9.3 V11.6 H5 V10.3 H6 V7.3 H5 Z" fill="#fff"/></svg>
<svg class="abs" style="left:1167px;top:113.3px" width="14" height="14"><circle cx="7" cy="7" r="7" fill="#888"/><circle cx="7.2" cy="3.6" r="1.5" fill="#fff"/><path d="M5 6 H8.3 V10.3 H9.3 V11.6 H5 V10.3 H6 V7.3 H5 Z" fill="#fff"/></svg>
<svg class="abs" style="left:1259.8px;top:113.3px" width="14" height="14"><circle cx="7" cy="7" r="7" fill="#888"/><circle cx="7.2" cy="3.6" r="1.5" fill="#fff"/><path d="M5 6 H8.3 V10.3 H9.3 V11.6 H5 V10.3 H6 V7.3 H5 Z" fill="#fff"/></svg>
<svg class="abs" style="left:1352.8px;top:113.3px" width="14" height="14"><circle cx="7" cy="7" r="7" fill="#888"/><circle cx="7.2" cy="3.6" r="1.5" fill="#fff"/><path d="M5 6 H8.3 V10.3 H9.3 V11.6 H5 V10.3 H6 V7.3 H5 Z" fill="#fff"/></svg>
<svg class="abs" style="left:1445.8px;top:113.3px" width="14" height="14"><circle cx="7" cy="7" r="7" fill="#888"/><circle cx="7.2" cy="3.6" r="1.5" fill="#fff"/><path d="M5 6 H8.3 V10.3 H9.3 V11.6 H5 V10.3 H6 V7.3 H5 Z" fill="#fff"/></svg>
<div class="dot g" style="left:63.0px;top:147.0px"></div>
<div class="abs" style="left:314px;top:148.24px;font-size:13px;font-weight:normal;letter-spacing:0.7px;color:#333;">1</div>
<div class="dot g" style="left:416.9px;top:149.0px"></div>
<div class="abs" style="left:436px;top:148.24px;font-size:13px;font-weight:normal;letter-spacing:0.7px;color:#333;">OK</div>
<div class="abs" style="left:578px;top:148.24px;font-size:13px;font-weight:normal;letter-spacing:0.7px;color:#333;">Jul 02, 2023</div>
<div class="abs" style="left:778px;top:148.24px;font-size:13px;font-weight:normal;letter-spacing:0.7px;color:#333;">1</div>
<div class="abs" style="left:898px;top:148.24px;font-size:13px;font-weight:normal;letter-spacing:0.7px;color:#333;">18</div>
<div class="dot g" style="left:919.0px;top:149.0px"></div>
<div class="abs" style="left:942.7px;top:148.24px;font-size:13px;font-weight:normal;letter-spacing:0.7px;color:#333;">0</div>
<div class="dot y" style="left:957.3px;top:149.0px"></div>
<div class="abs" style="left:980.2px;top:148.24px;font-size:13px;font-weight:normal;letter-spacing:0.7px;color:#333;">0</div>
<div class="dot r" style="left:993.5px;top:149.0px"></div>
<div class="abs" style="left:1017.6px;top:148.24px;font-size:13px;font-weight:normal;letter-spacing:0.7px;color:#333;">0</div>
<div class="dot gr" style="left:1030.0px;top:149.0px"></div>
<div class="abs" style="left:1136px;top:148.24px;font-size:13px;font-weight:normal;letter-spacing:0.7px;color:#333;">2</div>
<div class="abs" style="left:1229px;top:148.24px;font-size:13px;font-weight:normal;letter-spacing:0.7px;color:#333;">2</div>
<div class="abs" style="left:1322px;top:148.24px;font-size:13px;font-weight:normal;letter-spacing:0.7px;color:#333;">10</div>
<div class="abs" style="left:1415px;top:148.24px;font-size:13px;font-weight:normal;letter-spacing:0.7px;color:#333;">3</div>
<div class="dot g" style="left:63.0px;top:183.0px"></div>
<div class="abs" style="left:314px;top:184.24px;font-size:13px;font-weight:normal;letter-spacing:0.7px;color:#333;">1</div>
<div class="dot g" style="left:416.9px;top:185.0px"></div>
<div class="abs" style="left:436px;top:184.24px;font-size:13px;font-weight:normal;letter-spacing:0.7px;color:#333;">OK</div>
<div class="abs" style="left:578px;top:184.24px;font-size:13px;font-weight:normal;letter-spacing:0.7px;color:#333;">Jan 12, 2024</div>
<div class="abs" style="left:778px;top:184.24px;font-size:13px;font-weight:normal;letter-spacing:0.7px;color:#333;">6</div>
<div class="abs" style="left:898px;top:184.24px;font-size:13px;font-weight:normal;letter-spacing:0.7px;color:#333;">119</div>
<div class="dot g" style="left:927.5px;top:185.0px"></div>
<div class="abs" style="left:951.4px;top:184.24px;font-size:13px;font-weight:normal;letter-spacing:0.7px;color:#333;">0</div>
<div class="dot y" style="left:965.0px;top:185.0px"></div>
<div class="abs" style="left:988.8px;top:184.24px;font-size:13px;font-weight:normal;letter-spacing:0.7px;color:#333;">0</div>
<div class="dot r" style="left:1001.5px;top:185.0px"></div>
<div class="abs" style="left:1026px;top:184.24px;font-size:13px;font-weight:normal;letter-spacing:0.7px;color:#333;">0</div>
<div class="dot gr" style="left:1039.3px;top:185.0px"></div>
<div class="abs" style="left:1136px;top:184.24px;font-size:13px;font-weight:normal;letter-spacing:0.7px;color:#333;">2</div>
<div class="abs" style="left:1229px;top:184.24px;font-size:13px;font-weight:normal;letter-spacing:0.7px;color:#333;">31</div>
<div class="abs" style="left:1322px;top:184.24px;font-size:13px;font-weight:normal;letter-spacing:0.7px;color:#333;">86</div>
<div class="abs" style="left:1415px;top:184.24px;font-size:13px;font-weight:normal;letter-spacing:0.7px;color:#333;">0</div>
<div class="dot g" style="left:63.0px;top:219.0px"></div>
<div class="abs" style="left:314px;top:220.24px;font-size:13px;font-weight:normal;letter-spacing:0.7px;color:#333;">0</div>
<div class="dot g" style="left:416.9px;top:221.0px"></div>
<div class="abs" style="left:436px;top:220.24px;font-size:13px;font-weight:normal;letter-spacing:0.7px;color:#333;">OK</div>
<div class="abs" style="left:578px;top:220.24px;font-size:13px;font-weight:normal;letter-spacing:0.7px;color:#333;">Nov 17, 2021</div>
<div class="abs" style="left:778px;top:220.24px;font-size:13px;font-weight:normal;letter-spacing:0.7px;color:#333;">19</div>
<div class="abs" style="left:898px;top:220.24px;font-size:13px;font-weight:normal;letter-spacing:0.7px;color:#333;">3</div>
<div class="dot g" style="left:910.9px;top:221.0px"></div>
<div class="abs" style="left:934.7px;top:220.24px;font-size:13px;font-weight:normal;letter-spacing:0.7px;color:#333;">0</div>
<div class="dot y" style="left:948.1px;top:221.0px"></div>
<div class="abs" style="left:972px;top:220.24px;font-size:13px;font-weight:normal;letter-spacing:0.7px;color:#333;">0</div>
<div class="dot r" style="left:985.5px;top:221.0px"></div>
<div class="abs" style="left:1009.5px;top:220.24px;font-size:13px;font-weight:normal;letter-spacing:0.7px;color:#333;">6</div>
<div class="dot gr" style="left:1022.2px;top:221.0px"></div>
<div class="abs" style="left:1136px;top:220.24px;font-size:13px;font-weight:normal;letter-spacing:0.7px;color:#333;">2</div>
<div class="abs" style="left:1229px;top:220.24px;font-size:13px;font-weight:normal;letter-spacing:0.7px;color:#333;">3</div>
<div class="abs" style="left:1322px;top:220.24px;font-size:13px;font-weight:normal;letter-spacing:0.7px;color:#333;">4</div>
<div class="abs" style="left:1415px;top:220.24px;font-size:13px;font-weight:normal;letter-spacing:0.7px;color:#333;">0</div>

</body></html>
